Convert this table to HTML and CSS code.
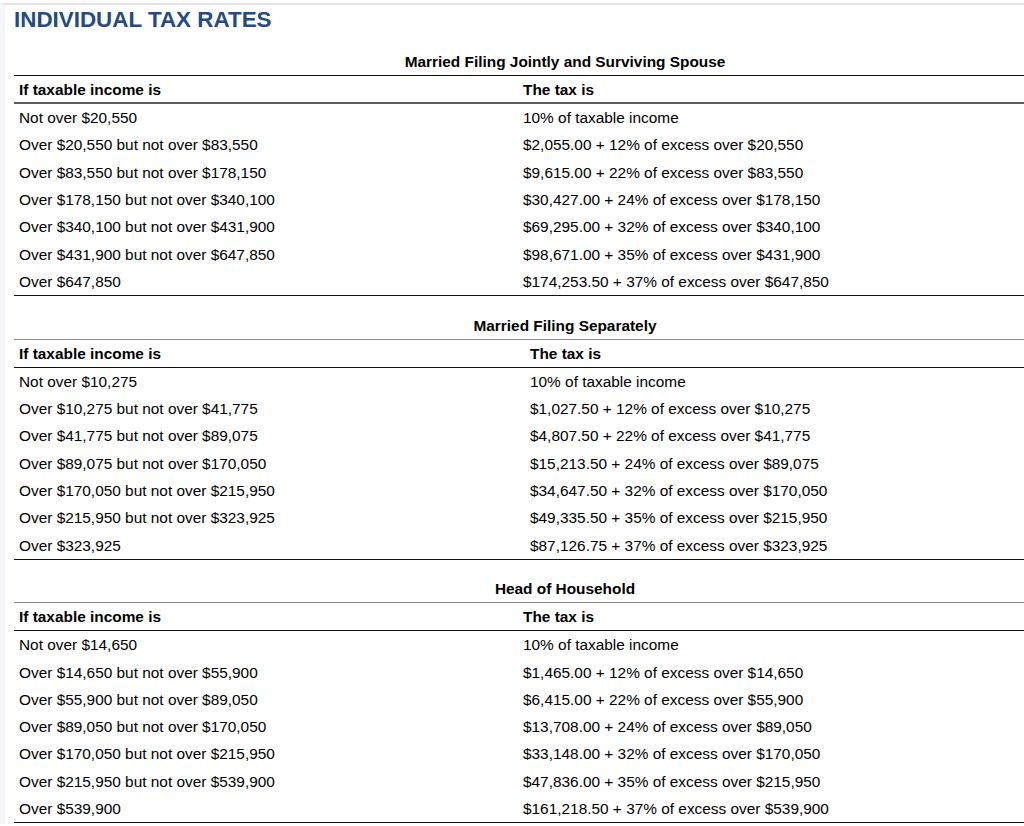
FILE: index.html
```html
<!DOCTYPE html>
<html lang="en">
<head>
<meta charset="utf-8">
<title>Individual Tax Rates</title>
<link rel="stylesheet" href="styles.css">
</head>
<body>
<div class="page">
  <h1 class="title">INDIVIDUAL TAX RATES</h1>

  <table class="rates rates-first">
    <caption>Married Filing Jointly and Surviving Spouse</caption>
    <colgroup><col class="c1 c1-a"><col></colgroup>
    <thead><tr><th>If taxable income is</th><th>The tax is</th></tr></thead>
    <tbody>
      <tr><td>Not over $20,550</td><td>10% of taxable income</td></tr>
      <tr><td>Over $20,550 but not over $83,550</td><td>$2,055.00 + 12% of excess over $20,550</td></tr>
      <tr><td>Over $83,550 but not over $178,150</td><td>$9,615.00 + 22% of excess over $83,550</td></tr>
      <tr><td>Over $178,150 but not over $340,100</td><td>$30,427.00 + 24% of excess over $178,150</td></tr>
      <tr><td>Over $340,100 but not over $431,900</td><td>$69,295.00 + 32% of excess over $340,100</td></tr>
      <tr><td>Over $431,900 but not over $647,850</td><td>$98,671.00 + 35% of excess over $431,900</td></tr>
      <tr><td>Over $647,850</td><td>$174,253.50 + 37% of excess over $647,850</td></tr>
    </tbody>
  </table>

  <table class="rates">
    <caption>Married Filing Separately</caption>
    <colgroup><col class="c1 c1-b"><col></colgroup>
    <thead><tr><th>If taxable income is</th><th>The tax is</th></tr></thead>
    <tbody>
      <tr><td>Not over $10,275</td><td>10% of taxable income</td></tr>
      <tr><td>Over $10,275 but not over $41,775</td><td>$1,027.50 + 12% of excess over $10,275</td></tr>
      <tr><td>Over $41,775 but not over $89,075</td><td>$4,807.50 + 22% of excess over $41,775</td></tr>
      <tr><td>Over $89,075 but not over $170,050</td><td>$15,213.50 + 24% of excess over $89,075</td></tr>
      <tr><td>Over $170,050 but not over $215,950</td><td>$34,647.50 + 32% of excess over $170,050</td></tr>
      <tr><td>Over $215,950 but not over $323,925</td><td>$49,335.50 + 35% of excess over $215,950</td></tr>
      <tr><td>Over $323,925</td><td>$87,126.75 + 37% of excess over $323,925</td></tr>
    </tbody>
  </table>

  <table class="rates">
    <caption>Head of Household</caption>
    <colgroup><col class="c1 c1-a"><col></colgroup>
    <thead><tr><th>If taxable income is</th><th>The tax is</th></tr></thead>
    <tbody>
      <tr><td>Not over $14,650</td><td>10% of taxable income</td></tr>
      <tr><td>Over $14,650 but not over $55,900</td><td>$1,465.00 + 12% of excess over $14,650</td></tr>
      <tr><td>Over $55,900 but not over $89,050</td><td>$6,415.00 + 22% of excess over $55,900</td></tr>
      <tr><td>Over $89,050 but not over $170,050</td><td>$13,708.00 + 24% of excess over $89,050</td></tr>
      <tr><td>Over $170,050 but not over $215,950</td><td>$33,148.00 + 32% of excess over $170,050</td></tr>
      <tr><td>Over $215,950 but not over $539,900</td><td>$47,836.00 + 35% of excess over $215,950</td></tr>
      <tr><td>Over $539,900</td><td>$161,218.50 + 37% of excess over $539,900</td></tr>
    </tbody>
  </table>
</div>
</body>
</html>
```

FILE: styles.css
```css
html, body {
  margin: 0;
  padding: 0;
  background: #ffffff;
  overflow: hidden;
}

body {
  font-family: "Liberation Sans", Arial, Helvetica, sans-serif;
  color: #000;
  font-size: 15.4px;
}

.page {
  margin-top: 3px;
  border-top: 2px solid #e3e3e3;
  border-left: 5px solid #f4f6fa;
  padding-left: 9px;
  height: 821px;
  box-sizing: border-box;
  overflow: hidden;
}

.title {
  margin: 0;
  padding-top: 2px;
  height: 30px;
  font-size: 22.4px;
  line-height: 26px;
  font-weight: bold;
  color: #254b82;
}

.rates {
  width: 1102px;
  border-collapse: collapse;
  table-layout: fixed;
  margin-top: 15.5px;
}

.rates-first {
  margin-top: 11px;
}

.c1-a { width: 504px; }
.c1-b { width: 511px; }

.rates caption {
  font-weight: bold;
  height: 27px;
  line-height: 27px;
  text-align: center;
  padding: 0;
}

.rates th {
  text-align: left;
  font-weight: bold;
  height: 27px;
  padding: 0 5px;
  line-height: 17px;
  border-top: 1px solid #8a8a8a;
  border-bottom: 1px solid #111;
}

.rates-first th {
  height: 26px;
  border-top: 1px solid #111;
  border-bottom: 2px solid #5e5e5e;
}

.rates td {
  height: 27.3px;
  padding: 0 5px;
  line-height: 17px;
  white-space: nowrap;
}

.rates tbody tr:last-child td {
  border-bottom: 1px solid #111;
}
```
